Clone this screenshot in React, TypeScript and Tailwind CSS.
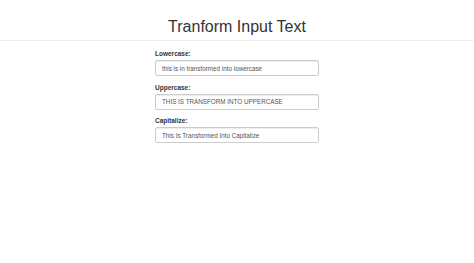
import React from "react";

const fields = [
  { label: "Lowercase:", value: "this is in transformed into lowercase" },
  { label: "Uppercase:", value: "THIS IS TRANSFORM INTO UPPERCASE" },
  { label: "Capitalize:", value: "This Is Transformed Into Capitalize" },
];

export default function App() {
  return (
    <div className="min-h-[263px] bg-white font-['Liberation_Sans',Arial,sans-serif] text-[#333]">
      <div className="border-b border-[#eeeeee] pt-[18px] pb-[4px]">
        <h1 className="text-center text-[16px] leading-[18px] font-normal text-[#333]">
          Tranform Input Text
        </h1>
      </div>
      <div className="mx-auto w-[164px] pt-[8px]">
        {fields.map((f) => (
          <div key={f.label} className="mb-[6.5px]">
            <label className="mb-[2px] block text-[6.5px] leading-[9px] font-bold text-[#333]">
              {f.label}
            </label>
            <input
              readOnly
              value={f.value}
              className="block h-[16px] w-full rounded-[2px] border border-[#cccccc] bg-white px-[6px] text-[6.3px] text-[#555] shadow-[inset_0_1px_1px_rgba(0,0,0,0.075)] outline-none"
            />
          </div>
        ))}
      </div>
    </div>
  );
}
